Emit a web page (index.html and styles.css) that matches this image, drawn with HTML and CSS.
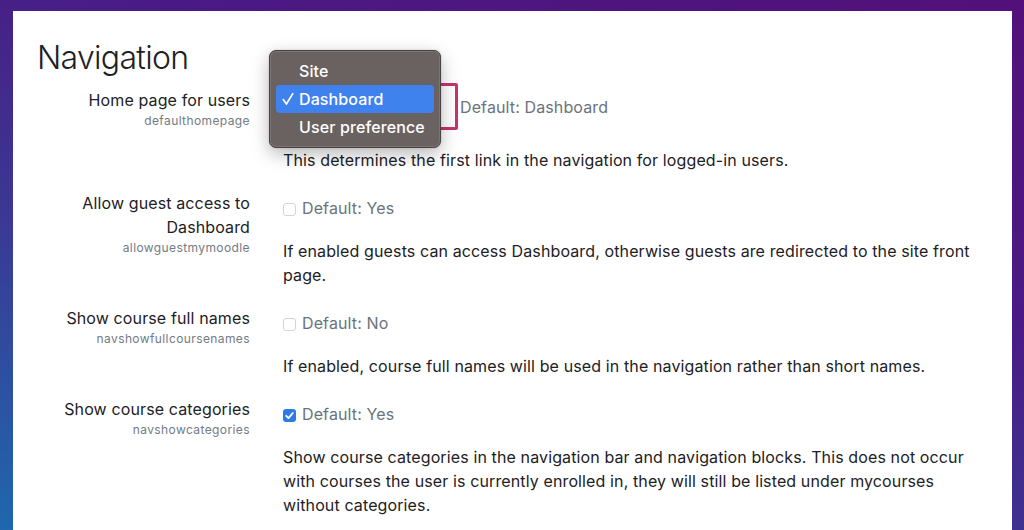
FILE: index.html
```html
<!DOCTYPE html>
<html lang="en">
<head>
<meta charset="utf-8">
<title>Navigation settings</title>
<link rel="stylesheet" href="styles.css">
</head>
<body>
<div class="page">
  <main class="panel">
    <h2 class="title">Navigation</h2>

    <div class="row row-first">
      <div class="label-col">
        <div class="label">Home page for users</div>
        <div class="sublabel">defaulthomepage</div>
      </div>
      <div class="setting-col">
        <div class="select-line">
          <div class="select-wrap">
            <div class="select"></div>
            <ul class="menu">
              <li class="menu-item">Site</li>
              <li class="menu-item active"><svg class="check" viewBox="0 0 12 14" width="12" height="14"><path d="M1.2 7.6 L4.4 12 L10.8 1.6" fill="none" stroke="#fff" stroke-width="1.7" stroke-linecap="round" stroke-linejoin="round"/></svg>Dashboard</li>
              <li class="menu-item">User preference</li>
            </ul>
          </div>
          <span class="default">Default: Dashboard</span>
        </div>
        <p class="desc">This determines the first link in the navigation for logged-in users.</p>
      </div>
    </div>

    <div class="row">
      <div class="label-col">
        <div class="label">Allow guest access to<br>Dashboard</div>
        <div class="sublabel">allowguestmymoodle</div>
      </div>
      <div class="setting-col">
        <div class="check-line"><span class="box"></span><span class="default">Default: Yes</span></div>
        <p class="desc">If enabled guests can access Dashboard, otherwise guests are redirected to the site front page.</p>
      </div>
    </div>

    <div class="row">
      <div class="label-col">
        <div class="label">Show course full names</div>
        <div class="sublabel">navshowfullcoursenames</div>
      </div>
      <div class="setting-col">
        <div class="check-line"><span class="box"></span><span class="default">Default: No</span></div>
        <p class="desc">If enabled, course full names will be used in the navigation rather than short names.</p>
      </div>
    </div>

    <div class="row">
      <div class="label-col">
        <div class="label">Show course categories</div>
        <div class="sublabel">navshowcategories</div>
      </div>
      <div class="setting-col">
        <div class="check-line"><span class="box checked"><svg viewBox="0 0 13 13" width="13" height="13"><path d="M3.2 6.8 L5.5 9.1 L9.8 4.0" fill="none" stroke="#fff" stroke-width="1.9" stroke-linecap="round" stroke-linejoin="round"/></svg></span><span class="default">Default: Yes</span></div>
        <p class="desc">Show course categories in the navigation bar and navigation blocks. This does not occur with courses the user is currently enrolled in, they will still be listed under mycourses without categories.</p>
      </div>
    </div>
  </main>
</div>
</body>
</html>
```

FILE: styles.css
```css
* { box-sizing: border-box; }

html, body {
  margin: 0;
  height: 100%;
}

body {
  background: linear-gradient(200deg, #53107a 0%, #4a1a84 35%, #3b3894 65%, #1f67ae 100%);
  font-family: "Inter", "Noto Sans", sans-serif;
  color: #1d2125;
  overflow: hidden;
  letter-spacing: 0.12px;
}

.page {
  height: 100vh;
  padding: 11px 12px 0 13px;
}

.panel {
  background: #fff;
  height: 100%;
  padding: 28px 27px 0 24px;
}

.title {
  margin: 0 0 6px 0;
  font-size: 32px;
  line-height: 38px;
  font-weight: 300;
  letter-spacing: -0.7px;
  color: #1d2125;
}

.row {
  display: grid;
  grid-template-columns: 213px 1fr;
  column-gap: 33px;
  margin-bottom: 19px;
}

.label-col {
  text-align: right;
}

.label {
  font-size: 16px;
  line-height: 24px;
}

.sublabel {
  font-size: 12px;
  line-height: 18px;
  color: #737b83;
  letter-spacing: 0.4px;
}

.setting-col {
  padding-top: 5px;
}

.row-first .label-col {
  padding-top: 5px;
}

.row-first .setting-col {
  padding-top: 0;
}

.select-line {
  display: flex;
  align-items: center;
  height: 47px;
}

.select-wrap {
  position: relative;
  width: 175px;
  height: 47px;
  margin-right: 2px;
}

.select {
  width: 100%;
  height: 100%;
  border: 3px solid #c8336e;
  border-radius: 2px;
  background: #fff;
}

.menu {
  position: absolute;
  left: -14px;
  top: -33px;
  width: 172px;
  margin: 0;
  padding: 6px 6px;
  list-style: none;
  background: #6a6260;
  border: 1px solid #4a4343;
  border-radius: 7px;
  box-shadow: inset 0 0 0 1px rgba(255,255,255,0.12), 0 6px 18px rgba(0,0,0,0.28), 0 0 2px rgba(0,0,0,0.2);
}

.menu-item {
  position: relative;
  height: 28px;
  line-height: 28px;
  padding-left: 23px;
  font-size: 16px;
  font-weight: 500;
  color: #fff;
  border-radius: 4px;
}

.menu-item.active {
  background: #3f82ee;
}

.check {
  position: absolute;
  left: 6px;
  top: 7px;
}

.default {
  font-size: 16px;
  line-height: 24px;
  color: #6a737b;
}

.check-line {
  display: flex;
  align-items: center;
  height: 24px;
}

.box {
  display: inline-block;
  width: 13px;
  height: 13px;
  margin: 2px 6px 0 0;
  border: 1px solid #d4d4d4;
  border-radius: 3px;
  background: #fff;
}

.box.checked {
  border: none;
  background: #2d7ce6;
}

.box.checked svg {
  display: block;
}

.desc {
  margin: 19px 0 0 0;
  font-size: 16px;
  line-height: 24px;
  max-width: 700px;
}

.row-first .desc {
  margin-top: 18px;
}
```
